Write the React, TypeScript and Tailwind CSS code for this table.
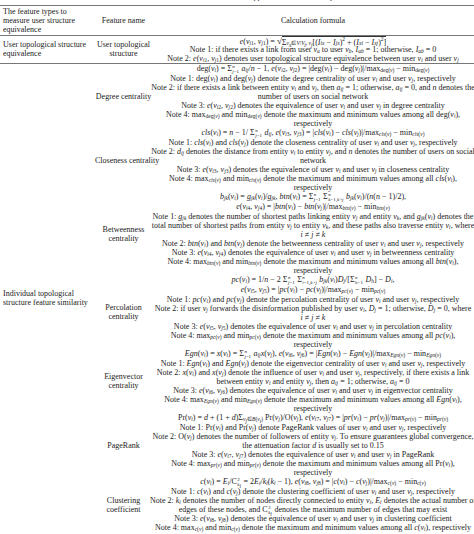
import type { ReactNode } from "react";

// words that stay upright inside $...$ math
const ROMAN = new Set(["deg", "max", "min", "Pr", "O", "C"]);

// tiny markup: $..$ math (letters italic), _x / _{..} sub, ^x / ^{..} sup, _{..}^{..} stacked, √{..} root
function render(s: string, startMath = false): ReactNode[] {
  const out: ReactNode[] = [];
  let math = startMath;
  let i = 0;
  let k = 0;
  let buf = "";
  const flush = () => {
    if (buf) {
      out.push(<span key={k++}>{buf}</span>);
      buf = "";
    }
  };
  const readGroup = (): string => {
    if (s[i] === "{") {
      let d = 1;
      let j = i + 1;
      let g = "";
      while (j < s.length) {
        if (s[j] === "{") d++;
        else if (s[j] === "}") {
          d--;
          if (d === 0) break;
        }
        g += s[j];
        j++;
      }
      i = j + 1;
      return g;
    }
    const g = s[i];
    i++;
    return g;
  };
  while (i < s.length) {
    const c = s[i];
    if (c === "$") {
      flush();
      math = !math;
      i++;
      continue;
    }
    if (c === "√" && s[i + 1] === "{") {
      flush();
      i++;
      const g = readGroup();
      out.push(
        <span key={k++}>
          <span className="text-[9px]">√</span>
          <span className="border-t border-[#333] pt-[0.5px]">{render(g, math)}</span>
        </span>
      );
      continue;
    }
    if (c === "_" || c === "^") {
      flush();
      i++;
      const g1 = readGroup();
      if (c === "_" && s[i] === "^") {
        i++;
        const g2 = readGroup();
        out.push(
          <span key={k++} className="inline-flex flex-col align-middle text-[5px] leading-[5px] mx-[0.5px]">
            <span>{render(g2, math)}</span>
            <span>{render(g1, math)}</span>
          </span>
        );
      } else if (c === "_") {
        out.push(
          <sub key={k++} className="text-[5.5px]">
            {render(g1, math)}
          </sub>
        );
      } else {
        out.push(
          <sup key={k++} className="text-[5.5px]">
            {render(g1, math)}
          </sup>
        );
      }
      continue;
    }
    if (math && /[A-Za-z]/.test(c)) {
      flush();
      let w = "";
      while (i < s.length && /[A-Za-z]/.test(s[i])) {
        w += s[i];
        i++;
      }
      out.push(ROMAN.has(w) ? <span key={k++}>{w}</span> : <i key={k++}>{w}</i>);
      continue;
    }
    buf += c;
    i++;
  }
  flush();
  return out;
}

type Line = [string, boolean?];

interface Feature {
  name: string[];
  lines: Line[];
}

const features: Feature[] = [
  {
    name: ["Degree centrality"],
    lines: [
      ["$deg(v_i) = Σ_{j=1}^{n} a_{ij}/n − 1, e(v_{i2}, v_{j2}) = |deg(v_i) − deg(v_j)|/max_{deg(v)} − min_{deg(v)}$", true],
      ["Note 1: $deg(v_i)$ and $deg(v_j)$ denote the degree centrality of user $v_i$ and user $v_j$, respectively"],
      ["Note 2: if there exists a link between entity $v_i$ and $v_j$, then $a_{ij}$ = 1; otherwise, $a_{ij}$ = 0, and $n$ denotes the"],
      ["number of users on social network"],
      ["Note 3: $e(v_{i2}, v_{j2})$ denotes the equivalence of user $v_i$ and user $v_j$ in degree centrality"],
      ["Note 4: $max_{deg(v)}$ and $min_{deg(v)}$ denote the maximum and minimum values among all $deg(v_i)$,"],
      ["respectively"],
    ],
  },
  {
    name: ["Closeness centrality"],
    lines: [
      ["$cls(v_i) = n − 1/ Σ_{j=1}^{n} d_{ij}, e(v_{i3}, v_{j3}) = |cls(v_i) − cls(v_j)|/max_{cls(v)} − min_{cls(v)}$", true],
      ["Note 1: $cls(v_i)$ and $cls(v_j)$ denote the closeness centrality of user $v_i$ and user $v_j$, respectively"],
      ["Note 2: $d_{ij}$ denotes the distance from entity $v_i$ to entity $v_j$, and $n$ denotes the number of users on social"],
      ["network"],
      ["Note 3: $e(v_{i3}, v_{j3})$ denotes the equivalence of user $v_i$ and user $v_j$ in closeness centrality"],
      ["Note 4: $max_{cls(v)}$ and $min_{cls(v)}$ denote the maximum and minimum values among all $cls(v_i)$,"],
      ["respectively"],
    ],
  },
  {
    name: ["Betweenness", "centrality"],
    lines: [
      ["$b_{jk}(v_i) = g_{jk}(v_i)/g_{jk}, btn(v_i) = Σ_{j=1}^{n} Σ_{k=1,k>j}^{n} b_{jk}(v_i)/(n(n − 1)/2),$", true],
      ["$e(v_{i4}, v_{j4}) = |btn(v_i) − btn(v_j)|/max_{btn(v)} − min_{btn(v)}$", true],
      ["Note 1: $g_{jk}$ denotes the number of shortest paths linking entity $v_j$ and entity $v_k$, and $g_{jk}(v_i)$ denotes the"],
      ["total number of shortest paths from entity $v_j$ to entity $v_k$, and these paths also traverse entity $v_i$, where"],
      ["$i ≠ j ≠ k$"],
      ["Note 2: $btn(v_i)$ and $btn(v_j)$ denote the betweenness centrality of user $v_i$ and user $v_j$, respectively"],
      ["Note 3: $e(v_{i4}, v_{j4})$ denotes the equivalence of user $v_i$ and user $v_j$ in betweenness centrality"],
      ["Note 4: $max_{btn(v)}$ and $min_{btn(v)}$ denote the maximum and minimum values among all $btn(v_i)$,"],
      ["respectively"],
    ],
  },
  {
    name: ["Percolation", "centrality"],
    lines: [
      ["$pc(v_i) = 1/n − 2 Σ_{j=1}^{n} Σ_{i=1,k>j}^{n} b_{jk}(v_i)D_j/[Σ_{h=1}^{n} D_h] − D_i,$", true],
      ["$e(v_{i5}, v_{j5}) = |pc(v_i) − pc(v_j)|/max_{pc(v)} − min_{pc(v)}$", true],
      ["Note 1: $pc(v_i)$ and $pc(v_j)$ denote the percolation centrality of user $v_i$ and user $v_j$, respectively"],
      ["Note 2: if user $v_j$ forwards the disinformation published by user $v_i$, $D_j$ = 1; otherwise, $D_j$ = 0, where"],
      ["$i ≠ j ≠ k$"],
      ["Note 3: $e(v_{i5}, v_{j5})$ denotes the equivalence of user $v_i$ and user $v_j$ in percolation centrality"],
      ["Note 4: $max_{pc(v)}$ and $min_{pc(v)}$ denote the maximum and minimum values among all $pc(v_i)$,"],
      ["respectively"],
    ],
  },
  {
    name: ["Eigenvector", "centrality"],
    lines: [
      ["$Egn(v_i) = x(v_i) = Σ_{j=1}^{n} a_{ij}x(v_j), e(v_{i6}, v_{j6}) = |Egn(v_i) − Egn(v_j)|/max_{Egn(v)} − min_{Egn(v)}$", true],
      ["Note 1: $Egn(v_i)$ and $Egn(v_j)$ denote the eigenvector centrality of user $v_i$ and user $v_j$, respectively"],
      ["Note 2: $x(v_i)$ and $x(v_j)$ denote the influence of user $v_i$ and user $v_j$, respectively, if there exists a link"],
      ["between entity $v_i$ and entity $v_j$, then $a_{ij}$ = 1; otherwise, $a_{ij}$ = 0"],
      ["Note 3: $e(v_{i6}, v_{j6})$ denotes the equivalence of user $v_i$ and user $v_j$ in eigenvector centrality"],
      ["Note 4: $max_{Egn(v)}$ and $min_{Egn(v)}$ denote the maximum and minimum values among all $Egn(v_i)$,"],
      ["respectively"],
    ],
  },
  {
    name: ["PageRank"],
    lines: [
      ["$Pr(v_i) = d + (1 + d)Σ_{v_j∈B(v_i)} Pr(v_j)/O(v_j), e(v_{i7}, v_{j7}) = |pr(v_i) − pr(v_j)|/max_{pr(v)} − min_{pr(v)}$", true],
      ["Note 1: $Pr(v_i)$ and $Pr(v_j)$ denote PageRank values of user $v_i$ and user $v_j$, respectively"],
      ["Note 2: $O(v_j)$ denotes the number of followers of entity $v_j$. To ensure guarantees global convergence,"],
      ["the attenuation factor $d$ is usually set to 0.15"],
      ["Note 3: $e(v_{i7}, v_{j7})$ denotes the equivalence of user $v_i$ and user $v_j$ in PageRank"],
      ["Note 4: $max_{pr(v)}$ and $min_{pr(v)}$ denote the maximum and minimum values among all $Pr(v_i)$,"],
      ["respectively"],
    ],
  },
  {
    name: ["Clustering", "coefficient"],
    lines: [
      ["$c(v_i) = E_i/C_{k_i}^{2} = 2E_i/k_i(k_i − 1), e(v_{i8}, v_{j8}) = |c(v_i) − c(v_j)|/max_{c(v)} − min_{c(v)}$", true],
      ["Note 1: $c(v_i)$ and $c(v_j)$ denote the clustering coefficient of user $v_i$ and user $v_j$, respectively"],
      ["Note 2: $k_i$ denotes the number of nodes directly connected to entity $v_i$, $E_i$ denotes the actual number of"],
      ["edges of these nodes, and $C_{k_i}^{2}$ denotes the maximum number of edges that may exist"],
      ["Note 3: $e(v_{i8}, v_{j8})$ denotes the equivalence of user $v_i$ and user $v_j$ in clustering coefficient"],
      ["Note 4: $max_{c(v)}$ and $min_{c(v)}$ denote the maximum and minimum values among all $c(v_i)$, respectively"],
    ],
  },
];

function FormulaLines({ lines }: { lines: Line[] }) {
  return (
    <div className="w-[322px] flex flex-col items-center">
      {lines.map(([t, f], i) => (
        <div key={i} className={f ? "h-[10px] leading-[10px] whitespace-nowrap" : "h-[9px] leading-[9px] whitespace-nowrap"}>
          {render(t)}
        </div>
      ))}
    </div>
  );
}

export default function App() {
  return (
    <div className="w-[474px] h-[534px] overflow-hidden bg-white text-[#222] text-[8px] font-['Liberation_Serif','Times_New_Roman',serif]">
      {/* running title, only its bottom edge shows */}
      <div className="h-[5px] overflow-hidden">
        <div className="-mt-[8px] pl-[250px] leading-[9px] whitespace-nowrap text-[#444]">
          applied to measure the equivalence of user structure
        </div>
      </div>

      {/* header */}
      <div className="flex items-center h-[31px] border-y border-[#777]">
        <div className="w-[95px] pl-[3px] leading-[9px] whitespace-nowrap">
          <div>The feature types to</div>
          <div>measure user structure</div>
          <div>equivalence</div>
        </div>
        <div className="w-[57px] text-center whitespace-nowrap">Feature name</div>
        <div className="w-[322px] text-center">Calculation formula</div>
      </div>

      {/* user topological structure */}
      <div className="flex items-center h-[28px] border-b border-[#777]">
        <div className="w-[95px] pl-[3px] leading-[8.5px] whitespace-nowrap">
          <div>User topological structure</div>
          <div>equivalence</div>
        </div>
        <div className="w-[57px] text-center leading-[8.5px] whitespace-nowrap">
          <div>User topological</div>
          <div>structure</div>
        </div>
        <div className="w-[322px] flex flex-col items-center">
          <div className="h-[10px] leading-[11px] whitespace-nowrap">
            {render("$e(v_{i1}, v_{j1}) = √{Σ_{v_x∈V/V_i, v_j}[(I_{ix} − I_{jx})^2 + (I_{xi} − I_{xj})^2]}$")}
          </div>
          <div className="h-[8.5px] leading-[8.5px] whitespace-nowrap">
            {render("Note 1: if there exists a link from user $v_a$ to user $v_b$, $I_{ab}$ = 1; otherwise, $I_{ab}$ = 0")}
          </div>
          <div className="h-[8.5px] leading-[8.5px] whitespace-nowrap">
            {render("Note 2: $e(v_{i1}, v_{j1})$ denotes user topological structure equivalence between user $v_i$ and user $v_j$")}
          </div>
        </div>
      </div>

      {/* individual topological structure features */}
      <div className="flex">
        <div className="w-[95px] pl-[3px] leading-[9px] whitespace-nowrap flex flex-col justify-center">
          <div>Individual topological</div>
          <div>structure feature similarity</div>
        </div>
        <div className="flex flex-col">
          {features.map((f, i) => (
            <div key={i} className="flex items-center">
              <div className="w-[57px] text-center leading-[9px] whitespace-nowrap">
                {f.name.map((n, j) => (
                  <div key={j}>{n}</div>
                ))}
              </div>
              <FormulaLines lines={f.lines} />
            </div>
          ))}
        </div>
      </div>
    </div>
  );
}
